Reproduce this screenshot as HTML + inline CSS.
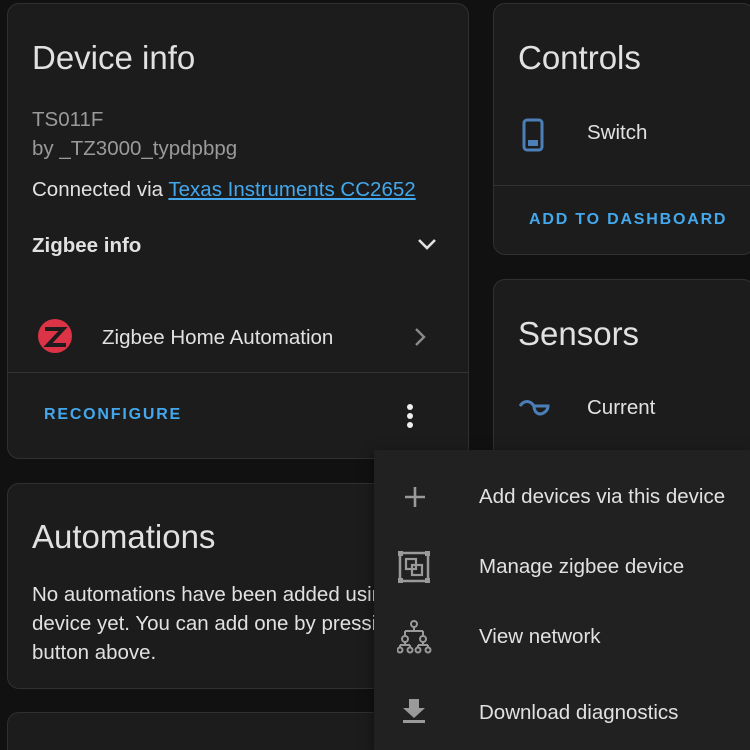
<!DOCTYPE html>
<html style="width:750px;height:750px;overflow:hidden"><head><style>
*{margin:0;padding:0;box-sizing:border-box}
body{width:750px;height:750px;overflow:hidden;background:#111111;font-family:"Liberation Sans",sans-serif;color:#e1e1e1;position:relative}
.card{position:absolute;background:#1c1c1c;border:1px solid #303030;border-radius:12px;overflow:hidden}
.t{position:absolute;white-space:nowrap}
.h{font-size:33px;color:#e1e1e1}
.b{font-size:20.5px}
.btn{font-size:16px;font-weight:bold;letter-spacing:1.8px;color:#43a8ed}
.div{position:absolute;left:0;right:0;height:1px;background:#333}
.menu{position:absolute;left:374px;top:450px;width:376px;height:300px;background:#212121;box-shadow:0 4px 12px rgba(0,0,0,.5);overflow:hidden}
</style></head><body>

<div class="card" style="left:7px;top:3px;width:462px;height:456px">
  <div class="t h" style="left:24px;top:35px">Device info</div>
  <div class="t b" style="left:24px;top:104px;color:#9a9a9a">TS011F</div>
  <div class="t b" style="left:24px;top:133px;color:#9a9a9a">by _TZ3000_typdpbpg</div>
  <div class="t b" style="left:24px;top:174px">Connected via <span style="color:#43a8ed;text-decoration:underline">Texas Instruments CC2652</span></div>
  <div class="t b" style="left:24px;top:230px;font-weight:bold">Zigbee info</div>
  <svg style="position:absolute;left:408px;top:232px" width="22" height="16" viewBox="0 0 22 16"><path d="M3 4l8 8 8-8" stroke="#e1e1e1" stroke-width="2.6" fill="none"/></svg>
  <svg style="position:absolute;left:29px;top:314px" width="36" height="36" viewBox="0 0 36 36"><circle cx="18" cy="18" r="17" fill="#dd3347"/><path d="M8 11h18L11 27h18" stroke="#1c1c1c" stroke-width="4" fill="none"/></svg>
  <div class="t b" style="left:94px;top:322px">Zigbee Home Automation</div>
  <svg style="position:absolute;left:404px;top:322px" width="16" height="22" viewBox="0 0 16 22"><path d="M4 3l8 8-8 8" stroke="#8a8a8a" stroke-width="2.4" fill="none"/></svg>
  <div class="div" style="top:368px"></div>
  <div class="t btn" style="left:36px;top:402px">RECONFIGURE</div>
  <svg style="position:absolute;left:395px;top:398px" width="14" height="30"><circle cx="7" cy="5" r="3" fill="#eee"/><circle cx="7" cy="14" r="3" fill="#eee"/><circle cx="7" cy="23" r="3" fill="#eee"/></svg>
</div>

<div class="card" style="left:493px;top:3px;width:262px;height:252px">
  <div class="t h" style="left:24px;top:35px">Controls</div>
  <svg style="position:absolute;left:28px;top:114px" width="24" height="36" viewBox="0 0 24 36"><rect x="2" y="2" width="18" height="30" rx="3" stroke="#4c7fb8" stroke-width="3" fill="none"/><rect x="6" y="22" width="10" height="6" fill="#4c7fb8"/></svg>
  <div class="t b" style="left:93px;top:117px">Switch</div>
  <div class="div" style="top:181px"></div>
  <div class="t btn" style="left:35px;top:207px">ADD TO DASHBOARD</div>
</div>

<div class="card" style="left:493px;top:279px;width:262px;height:200px">
  <div class="t h" style="left:24px;top:35px">Sensors</div>
  <svg style="position:absolute;left:24px;top:118px" width="34" height="20" viewBox="0 0 34 20"><path d="M2 8c4-6 10-6 14 0h14c0 5-5 8-8 8s-6-3-6-8" stroke="#4c7fb8" stroke-width="3" fill="none"/></svg>
  <div class="t b" style="left:93px;top:116px">Current</div>
</div>

<div class="card" style="left:7px;top:483px;width:462px;height:206px">
  <div class="t h" style="left:24px;top:34px">Automations</div>
  <div class="t b" style="left:24px;top:96px;line-height:29px">No automations have been added using this<br>device yet. You can add one by pressing the<br>button above.</div>
</div>

<div class="card" style="left:7px;top:712px;width:462px;height:38px;border-bottom:none;border-radius:12px 12px 0 0"></div>

<div class="menu">
  <svg style="position:absolute;left:29px;top:35px" width="24" height="24"><path d="M12 2v20M2 12h20" stroke="#9a9a9a" stroke-width="2.6"/></svg>
  <div class="t b" style="left:105px;top:35px">Add devices via this device</div>
  <svg style="position:absolute;left:23px;top:100px" width="34" height="34" viewBox="0 0 34 34"><rect x="3" y="3" width="28" height="28" stroke="#9a9a9a" stroke-width="2.5" fill="none"/><rect x="1" y="1" width="5" height="5" fill="#9a9a9a"/><rect x="28" y="1" width="5" height="5" fill="#9a9a9a"/><rect x="1" y="28" width="5" height="5" fill="#9a9a9a"/><rect x="28" y="28" width="5" height="5" fill="#9a9a9a"/><rect x="9" y="9" width="10" height="10" stroke="#9a9a9a" stroke-width="2.2" fill="none"/><rect x="15" y="15" width="10" height="10" stroke="#9a9a9a" stroke-width="2.2" fill="none"/></svg>
  <div class="t b" style="left:105px;top:105px">Manage zigbee device</div>
  <svg style="position:absolute;left:23px;top:170px" width="36" height="34" viewBox="0 0 36 34"><g stroke="#9a9a9a" stroke-width="2" fill="none"><circle cx="17" cy="4" r="3"/><path d="M17 7v4M8 11h18M8 11v5M26 11v5"/><circle cx="8" cy="19" r="3"/><circle cx="26" cy="19" r="3"/><path d="M8 22v3M3 25h10M3 25v2M13 25v2M26 22v3M21 25h10M21 25v2M31 25v2"/><circle cx="3" cy="30" r="2.5"/><circle cx="13" cy="30" r="2.5"/><circle cx="21" cy="30" r="2.5"/><circle cx="31" cy="30" r="2.5"/></g></svg>
  <div class="t b" style="left:105px;top:175px">View network</div>
  <svg style="position:absolute;left:28px;top:248px" width="24" height="26" viewBox="0 0 24 26"><path d="M7 1h10v9h6L12 20 1 10h6z" fill="#9a9a9a"/><rect x="1" y="22" width="22" height="3" fill="#9a9a9a"/></svg>
  <div class="t b" style="left:105px;top:251px">Download diagnostics</div>
</div>
</body></html>
